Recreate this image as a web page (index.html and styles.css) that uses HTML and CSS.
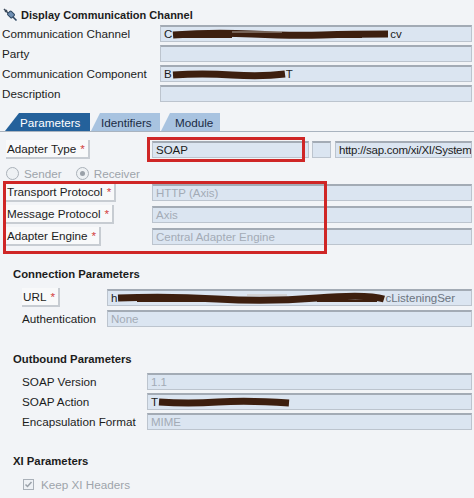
FILE: index.html
```html
<!DOCTYPE html>
<html lang="en">
<head>
    <meta charset="UTF-8">
    <meta name="viewport" content="width=device-width, initial-scale=1.0">
    <title>Display Communication Channel</title>
    <link rel="stylesheet" href="styles.css">
</head>
<body>
    <!-- Cabecera -->
    <div class="header">
        <svg class="header-icon" width="15" height="14" viewBox="0 0 15 14">
            <path d="M1 1 L5 5" stroke="#3c4a5a" stroke-width="1.6" fill="none"/>
            <path d="M2 4 L4 2" stroke="#3c4a5a" stroke-width="1.2" fill="none"/>
            <rect x="5" y="4" width="6" height="5" rx="1" transform="rotate(45 8 6.5)" fill="#6f8fb3" stroke="#2e4763" stroke-width="1"/>
            <path d="M10 9 L13.5 12.5" stroke="#2e4763" stroke-width="1.6"/>
        </svg>
        <span>Display Communication Channel</span>
    </div>

    <!-- Datos generales -->
    <div class="top-fields">
        <div class="row">
            <span class="label">Communication Channel</span>
            <div class="field">C<svg class="scribble" width="218" height="11" viewBox="0 0 218 11"><path d="M1 6 Q40 3 80 5 T150 6 T216 5" stroke="#3d1f0f" stroke-width="7" fill="none"/><path d="M2 8 L60 8 M120 8 L190 8" stroke="#3d1f0f" stroke-width="2"/><path d="M60 3 L110 3" stroke="#b0a69e" stroke-width="1"/></svg>cv</div>
        </div>
        <div class="row">
            <span class="label">Party</span>
            <div class="field"></div>
        </div>
        <div class="row">
            <span class="label">Communication Component</span>
            <div class="field">B<svg class="scribble" width="114" height="11" viewBox="0 0 114 11"><path d="M1 6 Q30 4 60 6 T113 5" stroke="#3d1f0f" stroke-width="7" fill="none"/></svg>T</div>
        </div>
        <div class="row">
            <span class="label">Description</span>
            <div class="field"></div>
        </div>
    </div>

    <!-- Pestañas -->
    <div class="tabs">
        <div class="tab tab-params">Parameters</div>
        <div class="tab tab-ident">Identifiers</div>
        <div class="tab tab-module">Module</div>
    </div>

    <div class="adapter-row">
        <span class="adapter-label"><span class="label-box">Adapter Type<span class="req">*</span></span></span>
        <span class="marked-soap">
            <span class="field soap-field">SOAP</span>
        </span>
        <span class="field small-field"></span>
        <span class="field ns-field">http://sap.com/xi/XI/System</span>
    </div>

    <div class="radio-row">
        <span class="radio"></span><span class="radio-text">Sender</span>
        <span class="radio checked"></span><span class="radio-text">Receiver</span>
    </div>

    <div class="marked-group">
        <div class="row group-row">
            <span class="group-label"><span class="label-box">Transport Protocol<span class="req">*</span></span></span>
            <div class="field disabled">HTTP (Axis)</div>
        </div>
        <div class="row group-row">
            <span class="group-label"><span class="label-box">Message Protocol<span class="req">*</span></span></span>
            <div class="field disabled">Axis</div>
        </div>
        <div class="row group-row">
            <span class="group-label"><span class="label-box">Adapter Engine<span class="req">*</span></span></span>
            <div class="field disabled">Central Adapter Engine</div>
        </div>
    </div>

    <!-- Parámetros de conexión -->
    <div class="section-title conn-title">Connection Parameters</div>
    <div class="conn-fields">
        <div class="row">
            <span class="conn-label"><span class="label-box">URL<span class="req">*</span></span></span>
            <div class="field">h<svg class="scribble" width="268" height="12" viewBox="0 0 268 12"><path d="M1 6 Q50 4 100 7 T200 6 T267 7" stroke="#3d1f0f" stroke-width="7" fill="none"/><path d="M130 3 L170 3" stroke="#c8beb6" stroke-width="1"/><path d="M20 9 L90 9 M200 9 L260 9" stroke="#3d1f0f" stroke-width="2"/></svg><span class="tail-text">cListeningSer</span></div>
        </div>
        <div class="row">
            <span class="conn-label plain">Authentication</span>
            <div class="field disabled">None</div>
        </div>
    </div>

    <!-- Parámetros de salida -->
    <div class="section-title out-title">Outbound Parameters</div>
    <div class="out-fields">
        <div class="row">
            <span class="out-label">SOAP Version</span>
            <div class="field disabled">1.1</div>
        </div>
        <div class="row">
            <span class="out-label">SOAP Action</span>
            <div class="field">T<svg class="scribble" width="132" height="11" viewBox="0 0 132 11"><path d="M1 5 Q30 7 60 5 T131 6" stroke="#3d1f0f" stroke-width="7" fill="none"/></svg></div>
        </div>
        <div class="row">
            <span class="out-label">Encapsulation Format</span>
            <div class="field disabled">MIME</div>
        </div>
    </div>

    <div class="section-title xi-title">XI Parameters</div>
    <div class="check-row">
        <svg class="check" width="11" height="11" viewBox="0 0 11 11">
            <rect x="0.5" y="0.5" width="10" height="10" fill="#eef1f5" stroke="#a9b0b8"/>
            <path d="M2.5 5.5 L4.5 7.5 L8.5 3" stroke="#9aa1a9" stroke-width="1.5" fill="none"/>
        </svg>
        <span>Keep XI Headers</span>
    </div>
</body>
</html>
```

FILE: styles.css
```css
body {
    margin: 0;
    width: 474px;
    height: 498px;
    overflow: hidden;
    background-color: #f2f4f7;
    font-family: "Liberation Sans", Arial, sans-serif;
    font-size: 11.7px;
    color: #1c1c1c;
}

.header {
    display: flex;
    align-items: center;
    gap: 3px;
    height: 19px;
    padding: 5px 0 1px 3px;
    font-size: 11px;
    font-weight: bold;
}

.header-icon {
    flex-shrink: 0;
}

.row {
    display: flex;
    align-items: center;
    height: 17px;
}

.field {
    flex: 1;
    height: 17px;
    box-sizing: border-box;
    display: flex;
    align-items: center;
    padding-left: 3px;
    font-size: 11.5px;
    background-color: #dbe5f1;
    border: 1px solid #bcc4ce;
    border-top: 2px solid #a3abb5;
    overflow: hidden;
    white-space: nowrap;
}

.field.disabled {
    color: #a3abb6;
}

.scribble {
    flex-shrink: 0;
}

.tail-text {
    color: #6b7480;
}

/* Datos generales */
.top-fields {
    display: flex;
    flex-direction: column;
    gap: 3px;
    padding: 0 2px;
}

.top-fields .label {
    width: 158px;
}

/* Pestañas */
.tabs {
    display: flex;
    gap: 1px;
    height: 18px;
    margin-top: 11px;
    padding-left: 5px;
    border-bottom: 1px solid #a9b3bf;
}

.tab {
    display: flex;
    align-items: center;
    background-color: #a8c3e0;
    color: #1b2b44;
    clip-path: polygon(0 100%, 9px 0, 100% 0, 100% 100%);
}

.tab-params {
    width: 85px;
    padding-left: 15px;
    box-sizing: border-box;
    background-color: #24619b;
    color: #ffffff;
    clip-path: polygon(0 100%, 14px 0, 100% 0, 100% 100%);
}

.tab-ident {
    width: 69px;
    padding-left: 10px;
    box-sizing: border-box;
}

.tab-module {
    width: 59px;
    padding-left: 14px;
    box-sizing: border-box;
}

/* Fila de tipo de adaptador */
.adapter-row {
    display: flex;
    align-items: center;
    height: 25px;
    margin-top: 5px;
    padding: 0 2px 0 6px;
}

.adapter-label {
    width: 146px;
    flex-shrink: 0;
}

.label-box {
    display: inline-flex;
    align-items: center;
    height: 19px;
    box-sizing: border-box;
    padding: 0 3px 0 1px;
    background-color: #f8f9fa;
    border-right: 2px solid #c7ccd2;
    border-bottom: 2px solid #c7ccd2;
}

.req {
    color: #d23b3b;
    margin-left: 4px;
}

.marked-soap {
    position: relative;
    display: flex;
    width: 157px;
}

.marked-soap::after {
    content: '';
    position: absolute;
    left: -5px;
    top: -4px;
    bottom: -4px;
    right: 4px;
    border: 3px solid #cf2626;
    pointer-events: none;
}

.small-field {
    flex: none;
    width: 19px;
    margin-left: 3px;
}

.ns-field {
    margin-left: 4px;
    letter-spacing: -0.25px;
}

/* Emisor / receptor */
.radio-row {
    display: flex;
    align-items: center;
    height: 14px;
    margin-top: 4px;
    padding-left: 6px;
    color: #9ea4ab;
}

.radio {
    width: 11px;
    height: 11px;
    border: 1px solid #aab1b9;
    border-radius: 50%;
    background-color: #eef1f4;
    position: relative;
}

.radio.checked::after {
    content: '';
    position: absolute;
    left: 3px;
    top: 3px;
    width: 5px;
    height: 5px;
    border-radius: 50%;
    background-color: #9aa1a9;
}

.radio-text {
    margin: 0 14px 0 5px;
}

/* Grupo marcado en rojo */
.marked-group {
    position: relative;
    display: flex;
    flex-direction: column;
    gap: 5px;
    width: 324px;
    box-sizing: border-box;
    margin: 1px 0 0 3px;
    padding: 3px 0 9px 3px;
}

.marked-group::after {
    content: '';
    position: absolute;
    inset: 0;
    border: 3px solid #cf2626;
    pointer-events: none;
}

.group-row {
    width: 466px;
    flex-shrink: 0;
}

.group-label {
    width: 146px;
    flex-shrink: 0;
}

/* Secciones */
.section-title {
    font-size: 11.3px;
    font-weight: bold;
    line-height: 14px;
    padding-left: 13px;
}

.conn-title {
    margin-top: 13px;
}

.conn-fields {
    display: flex;
    flex-direction: column;
    gap: 4px;
    margin-top: 8px;
    padding: 0 2px 0 22px;
}

.conn-label {
    width: 85px;
    flex-shrink: 0;
}

.out-title {
    margin-top: 25px;
}

.out-fields {
    display: flex;
    flex-direction: column;
    gap: 3px;
    margin-top: 7px;
    padding: 0 2px 0 22px;
}

.out-label {
    width: 125px;
    flex-shrink: 0;
}

.xi-title {
    margin-top: 24px;
}

.check-row {
    display: flex;
    align-items: center;
    gap: 7px;
    margin-top: 10px;
    padding-left: 23px;
    color: #9ea4ab;
}
```
